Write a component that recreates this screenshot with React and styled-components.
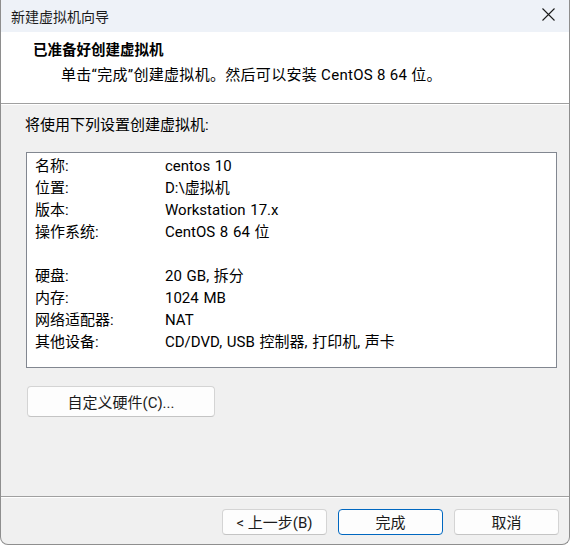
import React from 'react';
import styled, { createGlobalStyle } from 'styled-components';

const GlobalStyle = createGlobalStyle`
  html, body {
    margin: 0;
    padding: 0;
    background: #ffffff;
  }
  body {
    font-family: Roboto, 'Noto Sans CJK SC', sans-serif;
    font-size: 15px;
    color: #000;
  }
`;

const Window = styled.div`
  box-sizing: border-box;
  display: flex;
  flex-direction: column;
  width: 570px;
  height: 545px;
  border: 1px solid #8e8e8e;
  border-top: none;
  border-radius: 0 0 8px 8px;
  overflow: hidden;
  background: #f0f0f0;
`;

const TitleBar = styled.div`
  display: flex;
  align-items: center;
  justify-content: space-between;
  flex: 0 0 auto;
  height: 32px;
  padding: 0 14px 0 10px;
  background: #eef2f8;
  font-size: 14px;
  color: #1b1b1b;
`;

const TitleText = styled.span`
  line-height: 30px;
  padding-top: 1px;
`;

const CloseIcon = styled.svg`
  width: 13px;
  height: 13px;
  margin-bottom: 3px;
`;

const Header = styled.div`
  flex: 0 0 auto;
  height: 71px;
  box-sizing: border-box;
  padding: 8px 0 0 32px;
  background: #ffffff;
`;

const Heading = styled.div`
  font-weight: 700;
  font-size: 14.5px;
  line-height: 22px;
`;

const SubHeading = styled.div`
  line-height: 20px;
  margin-top: 3px;
  padding-left: 28px;
  letter-spacing: 0.3px;
  white-space: nowrap;
`;

const Rule = styled.div`
  flex: 0 0 auto;
  height: 0;
  border-top: 1px solid #a0a0a0;
  border-bottom: 1px solid #ffffff;
`;

const Body = styled.div`
  display: flex;
  flex-direction: column;
  flex: 1 0 0%;
  min-height: 0;
  padding: 10px 0 0 24px;
`;

const Intro = styled.div`
  line-height: 20px;
`;

const ListBox = styled.div`
  box-sizing: border-box;
  width: 531px;
  height: 216px;
  margin: 17px 0 0 1px;
  padding: 2px 0 0 8px;
  border: 1px solid #828790;
  background: #ffffff;
`;

const Row = styled.div`
  display: grid;
  grid-template-columns: 130px 1fr;
  height: 22px;
  line-height: 22px;
  white-space: nowrap;
  word-spacing: 1px;
`;

const Button = styled.button`
  box-sizing: border-box;
  display: flex;
  align-items: center;
  justify-content: center;
  width: ${(props) => props.width || 105}px;
  height: ${(props) => props.height || 26}px;
  margin: 0;
  padding: 0 0 1px;
  border: 1px solid ${(props) => (props.primary ? '#0067c0' : '#d4d4d4')};
  border-bottom-color: ${(props) => (props.primary ? '#0067c0' : '#c4c4c4')};
  border-radius: 4px;
  background: #fdfdfd;
  font-family: inherit;
  font-size: 15px;
  color: #1b1b1b;
`;

const CustomButton = styled(Button)`
  margin: 18px 0 0 2px;
`;

const Footer = styled.div`
  display: flex;
  justify-content: flex-end;
  align-items: flex-start;
  gap: 11px;
  flex: 0 0 auto;
  height: 46px;
  box-sizing: border-box;
  padding: 11px 10px 0 0;
`;

const settings = [
  ['名称:', 'centos 10'],
  ['位置:', 'D:\\虚拟机'],
  ['版本:', 'Workstation 17.x'],
  ['操作系统:', 'CentOS 8 64 位'],
  ['', ''],
  ['硬盘:', '20 GB, 拆分'],
  ['内存:', '1024 MB'],
  ['网络适配器:', 'NAT'],
  ['其他设备:', 'CD/DVD, USB 控制器, 打印机, 声卡'],
];

export default function App() {
  return (
    <>
      <GlobalStyle />
      <Window>
        <TitleBar>
          <TitleText>新建虚拟机向导</TitleText>
          <CloseIcon viewBox="0 0 13 13">
            <path d="M0.5 0.5 L12.5 12.5 M12.5 0.5 L0.5 12.5" stroke="#1b1b1b" strokeWidth="1.1" fill="none" />
          </CloseIcon>
        </TitleBar>

        <Header>
          <Heading>已准备好创建虚拟机</Heading>
          <SubHeading>单击“完成”创建虚拟机。然后可以安装 CentOS 8 64 位。</SubHeading>
        </Header>
        <Rule />

        <Body>
          <Intro>将使用下列设置创建虚拟机:</Intro>
          <ListBox>
            {settings.map(([label, value], i) => (
              <Row key={i}>
                <span>{label}</span>
                <span>{value}</span>
              </Row>
            ))}
          </ListBox>
          <CustomButton width={188} height={31}>
            自定义硬件(C)...
          </CustomButton>
        </Body>

        <Rule />
        <Footer>
          <Button>&lt; 上一步(B)</Button>
          <Button primary>完成</Button>
          <Button>取消</Button>
        </Footer>
      </Window>
    </>
  );
}
